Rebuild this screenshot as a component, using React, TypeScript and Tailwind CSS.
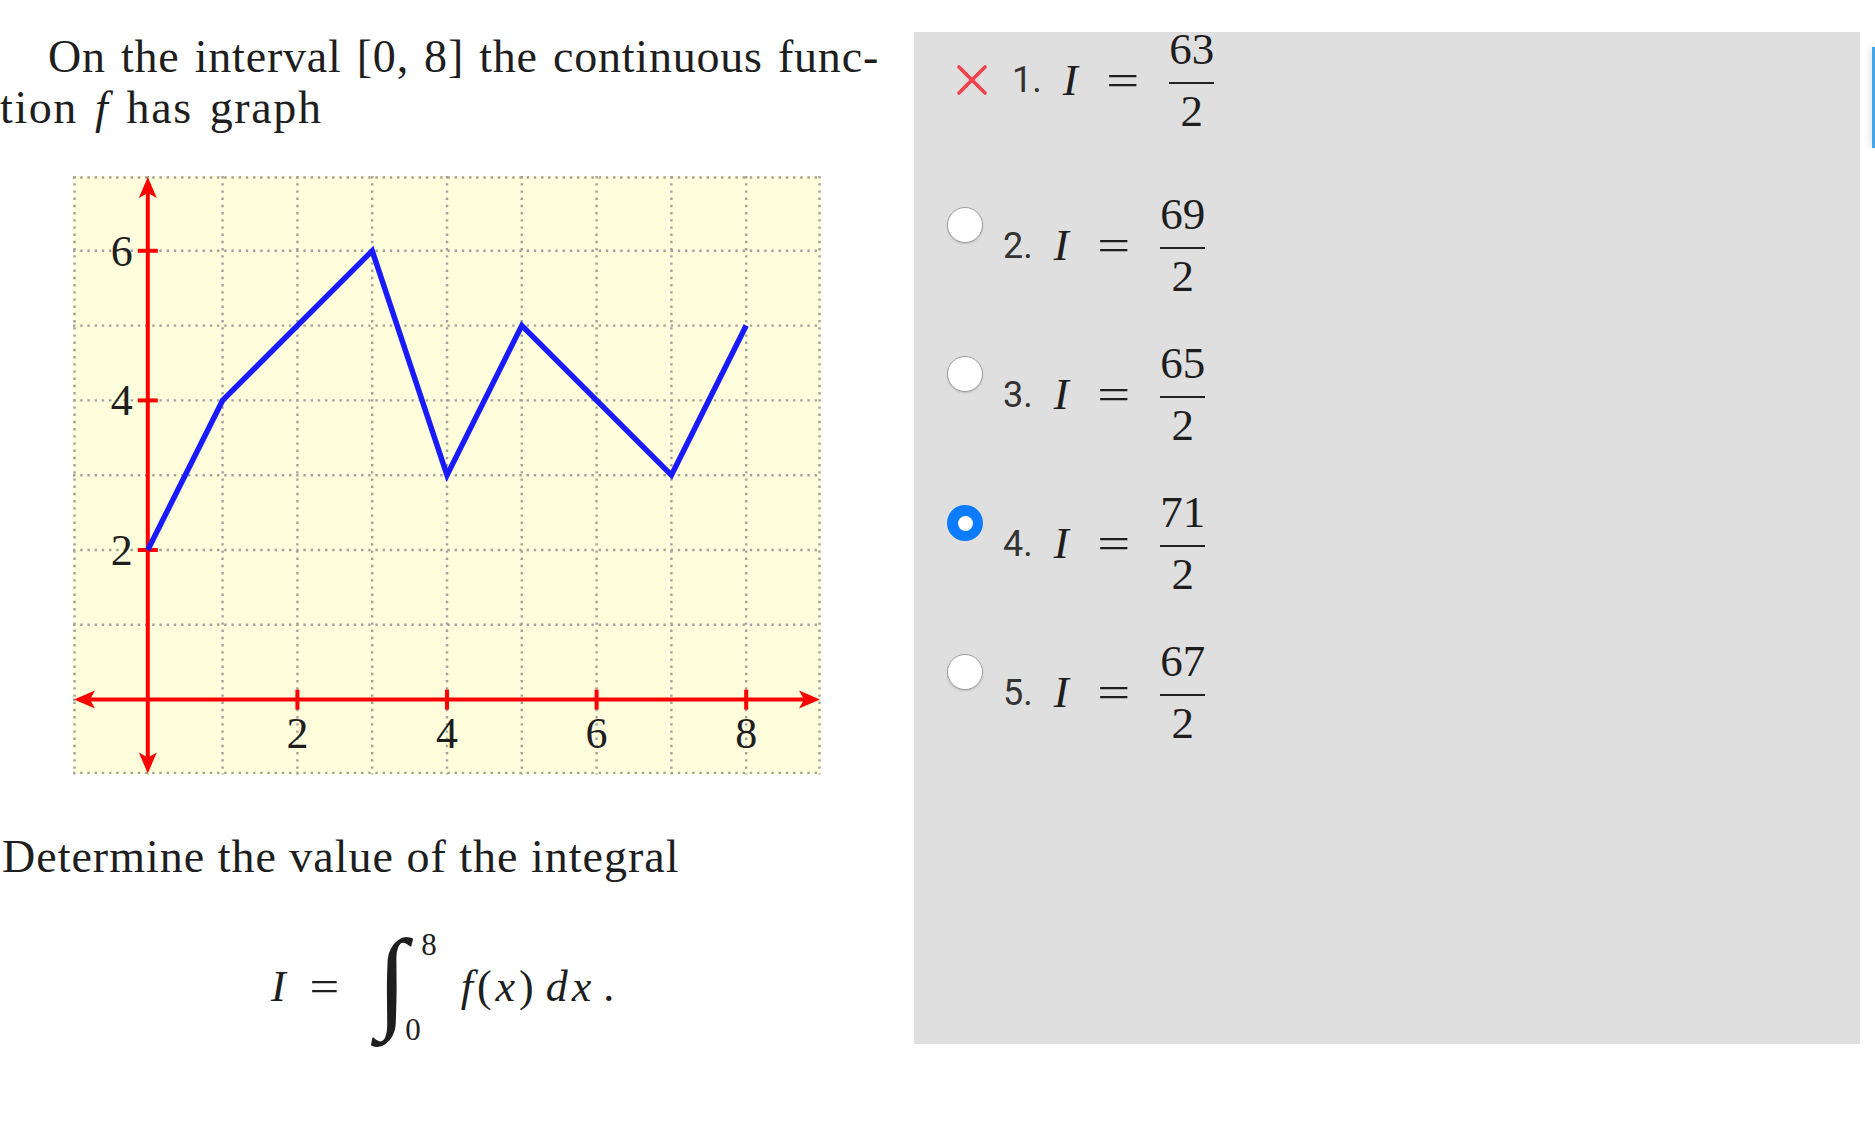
import React from "react";

const serif = "font-['Liberation_Serif',serif]";
const sans = "font-['Roboto',sans-serif]";

// one unit of the plot, in px; the plot spans x in [-1, 9], y in [-1, 7]
const U = 74.8;
const X = (x: number) => (x + 1) * U;
const Y = (y: number) => (7 - y) * U;

const POINTS: [number, number][] = [
  [0, 2],
  [1, 4],
  [3, 6],
  [4, 3],
  [5, 5],
  [7, 3],
  [8, 5],
];

function arrow(tx: number, ty: number, dx: number, dy: number) {
  const nx = -dy;
  const ny = dx;
  const bx = tx - dx * 21;
  const by = ty - dy * 21;
  const mx = tx - dx * 16;
  const my = ty - dy * 16;
  return `M${tx},${ty} L${bx + nx * 9},${by + ny * 9} L${mx},${my} L${bx - nx * 9},${by - ny * 9} Z`;
}

function Graph() {
  const W = 10 * U;
  const H = 8 * U;
  const xs = Array.from({ length: 11 }, (_, i) => i - 1);
  const ys = Array.from({ length: 9 }, (_, i) => i - 1);
  const ox = X(0);
  const oy = Y(0);
  return (
    <svg width={750} height={600} viewBox="0 0 750 600" className="block">
      <rect x={0} y={0} width={W} height={H} fill="#fefddc" />
      {xs.map((k) => {
        const x = Math.min(Math.max(X(k), 1.5), W - 1.5);
        return (
          <line key={`v${k}`} x1={x} y1={0} x2={x} y2={H} stroke="#a3a39c" strokeWidth={2.4} strokeDasharray="2.4 4.8" />
        );
      })}
      {ys.map((k) => {
        const y = Math.min(Math.max(Y(k), 1.5), H - 1.5);
        return (
          <line key={`h${k}`} x1={0} y1={y} x2={W} y2={y} stroke="#a3a39c" strokeWidth={2.4} strokeDasharray="2.4 4.8" />
        );
      })}

      {/* axes */}
      <line x1={16} y1={oy} x2={W - 16} y2={oy} stroke="#ff0000" strokeWidth={4} />
      <line x1={ox} y1={16} x2={ox} y2={H - 16} stroke="#ff0000" strokeWidth={4} />
      <path d={arrow(1, oy, -1, 0)} fill="#ff0000" />
      <path d={arrow(W - 1, oy, 1, 0)} fill="#ff0000" />
      <path d={arrow(ox, 1, 0, -1)} fill="#ff0000" />
      <path d={arrow(ox, H - 1, 0, 1)} fill="#ff0000" />
      {[2, 4, 6, 8].map((k) => (
        <line key={`tx${k}`} x1={X(k)} y1={oy - 10} x2={X(k)} y2={oy + 10} stroke="#ff0000" strokeWidth={4} />
      ))}
      {[2, 4, 6].map((k) => (
        <line key={`ty${k}`} x1={ox - 10} y1={Y(k)} x2={ox + 10} y2={Y(k)} stroke="#ff0000" strokeWidth={4} />
      ))}

      <polyline
        points={POINTS.map(([x, y]) => `${X(x)},${Y(y)}`).join(" ")}
        fill="none"
        stroke="#1a1aff"
        strokeWidth={5.5}
        strokeLinejoin="miter"
      />

      {[2, 4, 6, 8].map((k) => (
        <text key={`lx${k}`} x={X(k)} y={oy + 48} textAnchor="middle" fill="#1e1e1e" fontSize={44} className={serif}>
          {k}
        </text>
      ))}
      {[2, 4, 6].map((k) => (
        <text key={`ly${k}`} x={ox - 26} y={Y(k) + 15} textAnchor="middle" fill="#1e1e1e" fontSize={44} className={serif}>
          {k}
        </text>
      ))}
    </svg>
  );
}

function Frac({ num }: { num: string }) {
  return (
    <span className={`inline-flex flex-col items-center px-[4px] text-[45px] leading-none ${serif}`}>
      <span>{num}</span>
      <span className="mt-[10px] h-[2px] w-full bg-[#222]" />
      <span className="mt-[5px]">2</span>
    </span>
  );
}

function Radio({ checked }: { checked?: boolean }) {
  if (checked) {
    return (
      <span className="mt-[36px] flex h-[36px] w-[36px] shrink-0 items-center justify-center self-start rounded-full bg-[#0b7cff]">
        <span className="h-[15px] w-[15px] rounded-full bg-white" />
      </span>
    );
  }
  return (
    <span className="mt-[36px] h-[36px] w-[36px] shrink-0 self-start rounded-full border border-[#9e9e9e] bg-white shadow-[0_1px_2px_rgba(0,0,0,0.15)]" />
  );
}

function Equation({ n, num }: { n: number; num: string }) {
  return (
    <span className="flex items-center">
      <span className={`text-[36px] leading-none text-[#333] ${sans}`}>{n}.</span>
      <span className={`ml-[21px] text-[45px] italic leading-none ${serif}`}>I</span>
      <span className={`ml-[32px] inline-block scale-x-[1.3] text-[45px] leading-none ${serif}`}>=</span>
      <span className="ml-[30px]">
        <Frac num={num} />
      </span>
    </span>
  );
}

const OPTIONS = [
  { n: 2, num: "69" },
  { n: 3, num: "65" },
  { n: 4, num: "71", checked: true },
  { n: 5, num: "67" },
];

export default function App() {
  return (
    <div className="relative flex min-h-[1128px] w-[1875px] overflow-hidden bg-white text-[#1e1e1e]">
      <div className="w-[914px] shrink-0">
        <div className={`pt-[31px] text-[46px] leading-[51px] tracking-[0.8px] ${serif}`}>
          <p className="w-[879px] pl-[48px] text-justify [text-align-last:justify]">
            On the interval [0, 8] the continuous func-
          </p>
          <p className="tracking-[1.6px] [word-spacing:4px]">
            tion <i>f</i> has graph
          </p>
        </div>

        <div className="ml-[73px] mt-[43px]">
          <Graph />
        </div>

        <p className={`mt-[55px] pl-[2px] text-[46px] leading-[51px] tracking-[1px] ${serif}`}>
          Determine the value of the integral
        </p>

        <div className={`mt-[50px] flex h-[110px] items-center pl-[271px] text-[44px] leading-none ${serif}`}>
          <span className="italic">I</span>
          <span className="ml-[26px] inline-block scale-x-[1.2]">=</span>
          <span className="mb-[16px] ml-[40px] text-[112px] leading-none">∫</span>
          <span className="-ml-[6px] flex h-[116px] flex-col justify-between text-[31px] leading-none">
            <span className="ml-[20px]">8</span>
            <span className="ml-[4px]">0</span>
          </span>
          <span className="ml-[24px] flex items-center tracking-[4px]">
            <span className="italic">f</span>
            <span>(</span>
            <span className="italic">x</span>
            <span>)</span>
            <span className="ml-[8px] italic">dx</span>
            <span className="ml-[8px]">.</span>
          </span>
        </div>
      </div>

      <div className="mt-[32px] h-[1012px] w-[946px] shrink-0 overflow-hidden bg-[#dfdfdf]">
        <div className="-mt-[17px] flex h-[130px] items-center pl-[42px]">
          <svg width={32} height={32} viewBox="0 0 32 32" className="shrink-0">
            <path d="M3 3 L29 29 M29 3 L3 29" stroke="#f2414c" strokeWidth={3.6} strokeLinecap="round" />
          </svg>
          <span className="ml-[24px]">
            <Equation n={1} num="63" />
          </span>
        </div>
        <div className="mt-[26px]">
          {OPTIONS.map((o) => (
            <div key={o.n} className="flex h-[149px] items-center pl-[33px]">
              <Radio checked={o.checked} />
              <span className="ml-[20px]">
                <Equation n={o.n} num={o.num} />
              </span>
            </div>
          ))}
        </div>
      </div>

      <div className="absolute right-0 top-[47px] h-[101px] w-[3px] bg-[#45a6ea] shadow-[0_0_8px_rgba(0,0,0,0.25)]" />
    </div>
  );
}
